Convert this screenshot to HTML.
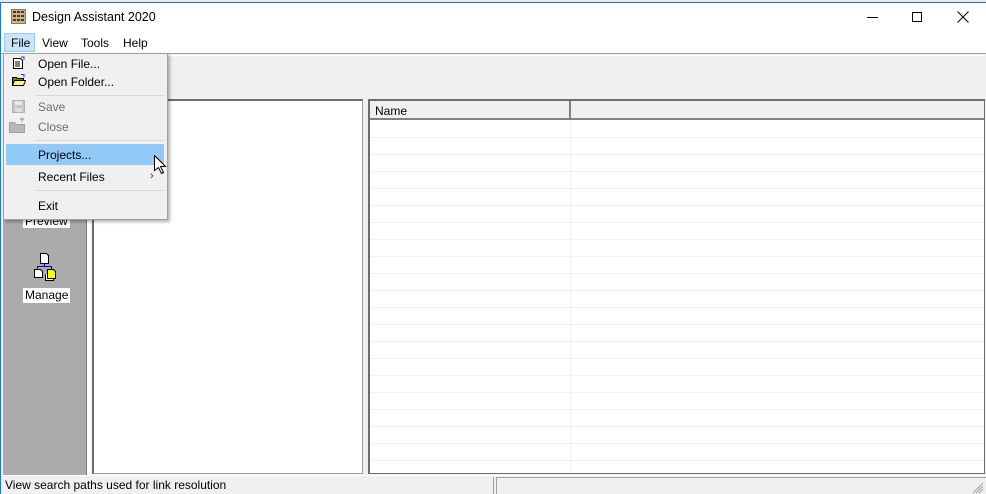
<!DOCTYPE html>
<html><head><meta charset="utf-8"><style>
*{margin:0;padding:0;box-sizing:border-box}
body{width:986px;height:494px;overflow:hidden;background:#f0f0f0;font-family:"Liberation Sans",sans-serif;font-size:12px;color:#000;position:relative}
.a{position:absolute}
.t{font-family:"Liberation Sans",sans-serif;font-size:12px}
</style></head><body>
<div class="a" style="left:0;top:0;width:986px;height:2px;background:#e8e8e8"></div>
<div class="a" style="left:0;top:2px;width:986px;height:1px;background:#1a79d6"></div>
<div class="a" style="left:0;top:2px;width:1px;height:492px;background:#1a79d6"></div>
<div class="a" style="left:1px;top:3px;width:985px;height:30px;background:#fff"></div>
<div class="a" style="left:11px;top:9px;width:15px;height:15px;background:#c9b48a;border:1px solid #8a7a5a"></div>
<svg class="a" style="left:12px;top:10px" width="13" height="13"><g fill="#4a3a20"><rect x="1" y="1" width="3" height="2"/><rect x="5" y="1" width="3" height="2"/><rect x="9" y="1" width="3" height="2"/><rect x="1" y="5" width="3" height="2"/><rect x="9" y="5" width="3" height="2"/><rect x="1" y="9" width="3" height="2"/><rect x="5" y="9" width="3" height="2"/><rect x="9" y="9" width="3" height="2"/><rect x="5" y="5" width="3" height="2"/></g></svg>
<div class="a t" style="left:32px;top:10px;font-size:12.5px">Design Assistant 2020</div>
<div class="a" style="left:867px;top:17px;width:11px;height:1px;background:#000"></div>
<div class="a" style="left:912px;top:12px;width:10px;height:10px;border:1px solid #000"></div>
<svg class="a" style="left:957px;top:11px" width="12" height="12"><path d="M0.5 0.5L11.5 11.5M11.5 0.5L0.5 11.5" stroke="#000" stroke-width="1"/></svg>
<div class="a" style="left:1px;top:33px;width:985px;height:20px;background:#fff"></div>
<div class="a" style="left:4px;top:33px;width:31px;height:19px;background:#cce4f7;border:1px solid #99c9ef"></div>
<div class="a t" style="left:11px;top:36px">File</div>
<div class="a t" style="left:42px;top:36px">View</div>
<div class="a t" style="left:81px;top:36px">Tools</div>
<div class="a t" style="left:123px;top:36px">Help</div>
<div class="a" style="left:1px;top:53px;width:985px;height:1px;background:#a0a0a0"></div>
<div class="a" style="left:1px;top:55px;width:984px;height:1px;background:#fff"></div>
<div class="a" style="left:3px;top:98px;width:84px;height:377px;background:#ababab;border-right:1px solid #808080"></div>
<div class="a" style="left:87px;top:98px;width:4px;height:377px;background:#fff"></div>
<div class="a t" style="left:23px;top:214px;background:#fff;padding:0 2px;height:14px;line-height:14px">Preview</div>
<svg class="a" style="left:33px;top:253px" width="26" height="30">
<path d="M7.5 0.5h6l2 2v8h-8z" fill="#fff" stroke="#000"/>
<path d="M11.5 10.5v3M4.5 16.5v-3h14v3" stroke="#0000d0" fill="none"/>
<path d="M1.5 16.5h6l2 2v6h-8z" fill="#fff" stroke="#000"/>
<path d="M12.5 21.5v6h8v-6" fill="#fff" stroke="#000"/>
<path d="M14.5 16.5h6l2 2v7h-8z" fill="#ff0" stroke="#000"/>
</svg>
<div class="a t" style="left:23px;top:288px;background:#fff;padding:0 2px;height:15px;line-height:15px">Manage</div>
<div class="a" style="left:92px;top:99px;width:271px;height:375px;background:#fff;border:2px solid #6d6d6d;border-right-color:#a0a0a0;border-bottom-color:#a0a0a0;border-right-width:1px;border-bottom-width:1px"></div>
<div class="a" style="left:368px;top:99px;width:617px;height:375px;background:#fff;border:2px solid #6d6d6d;border-right-width:1px;border-bottom-width:1px"></div>
<div class="a" style="left:370px;top:101px;width:614px;height:19px;background:#f0f0f0;border-bottom:2px solid #808080"></div>
<div class="a" style="left:569px;top:101px;width:2px;height:18px;background:#808080"></div>
<div class="a t" style="left:375px;top:104px">Name</div>
<div class="a" style="left:570px;top:120px;width:1px;height:352px;background:#f0f0f0"></div>
<div class="a" style="left:370px;top:137px;width:614px;height:336px;background:repeating-linear-gradient(#f0f0f0 0,#f0f0f0 1px,transparent 1px,transparent 17px)"></div>
<div class="a" style="left:1px;top:475px;width:985px;height:19px;background:#f0f0f0;border-top:1px solid #fff"></div>
<div class="a t" style="left:5px;top:478px">View search paths used for link resolution</div>
<div class="a" style="left:493px;top:477px;width:1px;height:17px;background:#a0a0a0"></div>
<div class="a" style="left:496px;top:477px;width:490px;height:17px;border-left:1px solid #a0a0a0;border-top:1px solid #a0a0a0"></div>
<svg class="a" style="left:972px;top:482px" width="12" height="12"><path d="M11 1L1 11M11 4L4 11M11 7L7 11" stroke="#a0a0a0"/></svg>
<div class="a" style="left:3px;top:53px;width:165px;height:167px;background:#f0f0f0;border:1px solid #a0a0a0;box-shadow:2px 2px 3px rgba(0,0,0,.3)"></div>
<div class="a" style="left:35px;top:95px;width:129px;height:1px;background:#d7d7d7"></div>
<div class="a" style="left:35px;top:140px;width:129px;height:1px;background:#d7d7d7"></div>
<div class="a" style="left:35px;top:190px;width:129px;height:1px;background:#d7d7d7"></div>
<div class="a" style="left:6px;top:144px;width:158px;height:21px;background:#91c9f7"></div>
<svg class="a" style="left:12px;top:56px" width="14" height="14"><path d="M1.5 2.5h7l2 2v8h-9z" fill="#fff" stroke="#000"/><path d="M3 6h5M3 8h5M3 10h5" stroke="#000"/><path d="M9 1l3 0 0 3" stroke="#0040ff" fill="none"/></svg>
<svg class="a" style="left:12px;top:74px" width="14" height="13"><path d="M0.5 3.5h4l1 1h6v7h-11z" fill="#808000" stroke="#000"/><path d="M2.5 6.5h11l-2 5h-11z" fill="#ffff60" stroke="#000"/><path d="M9 0.5l3 0 0 3" stroke="#0040ff" fill="none"/></svg>
<div class="a t" style="left:38px;top:57px">Open File...</div>
<div class="a t" style="left:38px;top:75px">Open Folder...</div>
<svg class="a" style="left:12px;top:100px" width="13" height="13"><rect x="0.5" y="0.5" width="12" height="12" fill="#c8c8c8" stroke="#b0b0b0"/><rect x="3" y="1" width="7" height="4" fill="#e8e8e8"/><rect x="3" y="8" width="7" height="4" fill="#e0e0e0"/></svg>
<svg class="a" style="left:9px;top:117px" width="17" height="16"><path d="M0.5 5.5h5l1 2h9v8h-15z" fill="#b8b8b8" stroke="#a0a0a0"/><path d="M11 3l2-2 2 2M13 1v4" stroke="#a0a0a0" fill="none"/></svg>
<div class="a t" style="left:38px;top:100px;color:#6d6d6d">Save</div>
<div class="a t" style="left:38px;top:120px;color:#6d6d6d">Close</div>
<div class="a t" style="left:38px;top:148px">Projects...</div>
<div class="a t" style="left:38px;top:170px">Recent Files</div>
<div class="a t" style="left:150px;top:170px;font-size:11px;color:#333">›</div>
<div class="a t" style="left:38px;top:199px">Exit</div>
<svg class="a" style="left:154px;top:155px" width="14" height="20"><path d="M0.5 0.5v15l4-3 3 6 2-1-3-6h5z" fill="#fff" stroke="#000"/></svg>
</body></html>
